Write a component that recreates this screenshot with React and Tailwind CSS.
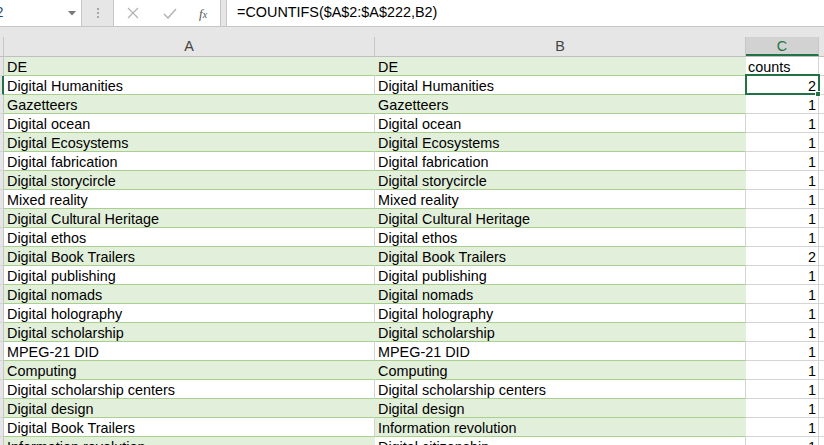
const rows = [
  ["DE", "DE", "counts", true, true],
  ["Digital Humanities", "Digital Humanities", "2", false, false],
  ["Gazetteers", "Gazetteers", "1", true, true],
  ["Digital ocean", "Digital ocean", "1", false, false],
  ["Digital Ecosystems", "Digital Ecosystems", "1", true, true],
  ["Digital fabrication", "Digital fabrication", "1", false, false],
  ["Digital storycircle", "Digital storycircle", "1", true, true],
  ["Mixed reality", "Mixed reality", "1", false, false],
  ["Digital Cultural Heritage", "Digital Cultural Heritage", "1", true, true],
  ["Digital ethos", "Digital ethos", "1", false, false],
  ["Digital Book Trailers", "Digital Book Trailers", "2", true, true],
  ["Digital publishing", "Digital publishing", "1", false, false],
  ["Digital nomads", "Digital nomads", "1", true, true],
  ["Digital holography", "Digital holography", "1", false, false],
  ["Digital scholarship", "Digital scholarship", "1", true, true],
  ["MPEG-21 DID", "MPEG-21 DID", "1", false, false],
  ["Computing", "Computing", "1", true, true],
  ["Digital scholarship centers", "Digital scholarship centers", "1", false, false],
  ["Digital design", "Digital design", "1", true, true],
  ["Digital Book Trailers", "Information revolution", "1", false, true],
  ["Information revolution", "Digital citizenship", "1", true, false],
];

function TableCell({ text, green }) {
  return (
    <div
      className={
        "w-[371px] shrink-0 border-b border-r border-b-[#a9d08e] pl-[3px] pt-[2px] leading-[16px] whitespace-nowrap overflow-hidden " +
        (green ? "bg-[#e2efda] border-r-[#e2efda]" : "bg-white border-r-[#d4d4d4]")
      }
    >
      {text}
    </div>
  );
}

function FormulaBar() {
  return (
    <div className="flex h-[27px] bg-[#e6e6e6] border-b border-[#c6c6c6]">
      <div className="relative w-[82px] shrink-0 bg-white border-r border-[#c6c6c6] overflow-hidden">
        <span className="absolute left-[-15px] top-[4px] text-[14.4px] leading-[17px] text-[#1f4e79]">C2</span>
        <svg className="absolute left-[68px] top-[11px]" width="8" height="5" viewBox="0 0 8 5">
          <path d="M0 0h8L4 4.5z" fill="#777" />
        </svg>
      </div>
      <div className="w-[31px] shrink-0 flex flex-col items-center justify-center gap-[2px]">
        <span className="w-[2px] h-[2px] bg-[#a6a6a6]" />
        <span className="w-[2px] h-[2px] bg-[#a6a6a6]" />
        <span className="w-[2px] h-[2px] bg-[#a6a6a6]" />
      </div>
      <div className="w-[108px] shrink-0 bg-white border-x border-[#c6c6c6] flex items-center">
        <svg className="ml-[13px]" width="12" height="12" viewBox="0 0 12 12">
          <path d="M1 1l10 10M11 1L1 11" stroke="#b3b3b3" strokeWidth="1.2" />
        </svg>
        <svg className="ml-[24px]" width="14" height="11" viewBox="0 0 14 11">
          <path d="M1 6l4 4 8-9" stroke="#b3b3b3" strokeWidth="1.5" fill="none" />
        </svg>
        <span className="ml-[22px] text-[13px] italic text-[#555] font-['Liberation_Serif',serif] leading-none">
          f<span className="text-[10px]">x</span>
        </span>
      </div>
      <div className="w-[5px] shrink-0" />
      <div className="flex-1 bg-white border-l border-[#c6c6c6] pl-[10px] pt-[4px] text-[14.4px] leading-[17px] whitespace-nowrap">
        =COUNTIFS($A$2:$A$222,B2)
      </div>
    </div>
  );
}

export default function App() {
  return (
    <div className="relative w-[824px] h-[445px] overflow-hidden bg-white text-black font-['Liberation_Sans',Arial,sans-serif] text-[14.4px]">
      <FormulaBar />
      <div className="h-[10px] bg-[#e6e6e6]" />
      <div className="flex h-[20px] bg-[#e6e6e6] border-b border-[#bfbfbf] text-[#444] text-[14.4px] leading-[19px]">
        <div className="w-[4px] shrink-0 border-r border-[#c6c6c6]" />
        <div className="w-[371px] shrink-0 border-r border-[#c6c6c6] text-center">A</div>
        <div className="w-[371px] shrink-0 border-r border-[#c6c6c6] text-center">B</div>
        <div className="w-[73px] shrink-0 bg-[#d2d2d2] border-r border-[#c6c6c6] border-b-2 border-b-[#217346] text-center text-[#217346] leading-[18px]">C</div>
        <div className="flex-1" />
      </div>
      {rows.map(([a, b, c, ga, gb], i) => (
        <div key={i} className="flex h-[19px]">
          <div
            className={
              "w-[4px] shrink-0 bg-[#e6e6e6] border-b border-b-[#d4d4d4] " +
              (i === 1 ? "border-r-2 border-r-[#217346]" : "border-r border-r-[#c6c6c6]")
            }
          />
          <TableCell text={a} green={ga} />
          <TableCell text={b} green={gb} />
          <div
            className={
              "w-[73px] shrink-0 border-b border-r border-[#d4d4d4] pt-[2px] leading-[16px] whitespace-nowrap " +
              (i === 0 ? "pl-[2px]" : "text-right pr-[2px]")
            }
          >
            {c}
          </div>
          <div className="flex-1 border-b border-[#d4d4d4]" />
        </div>
      ))}
      <div className="absolute left-[745px] top-[74px] w-[75px] h-[21px] border-2 border-[#217346]" />
      <div className="absolute left-[815px] top-[91px] w-[6px] h-[6px] bg-[#217346] border border-white" />
    </div>
  );
}
